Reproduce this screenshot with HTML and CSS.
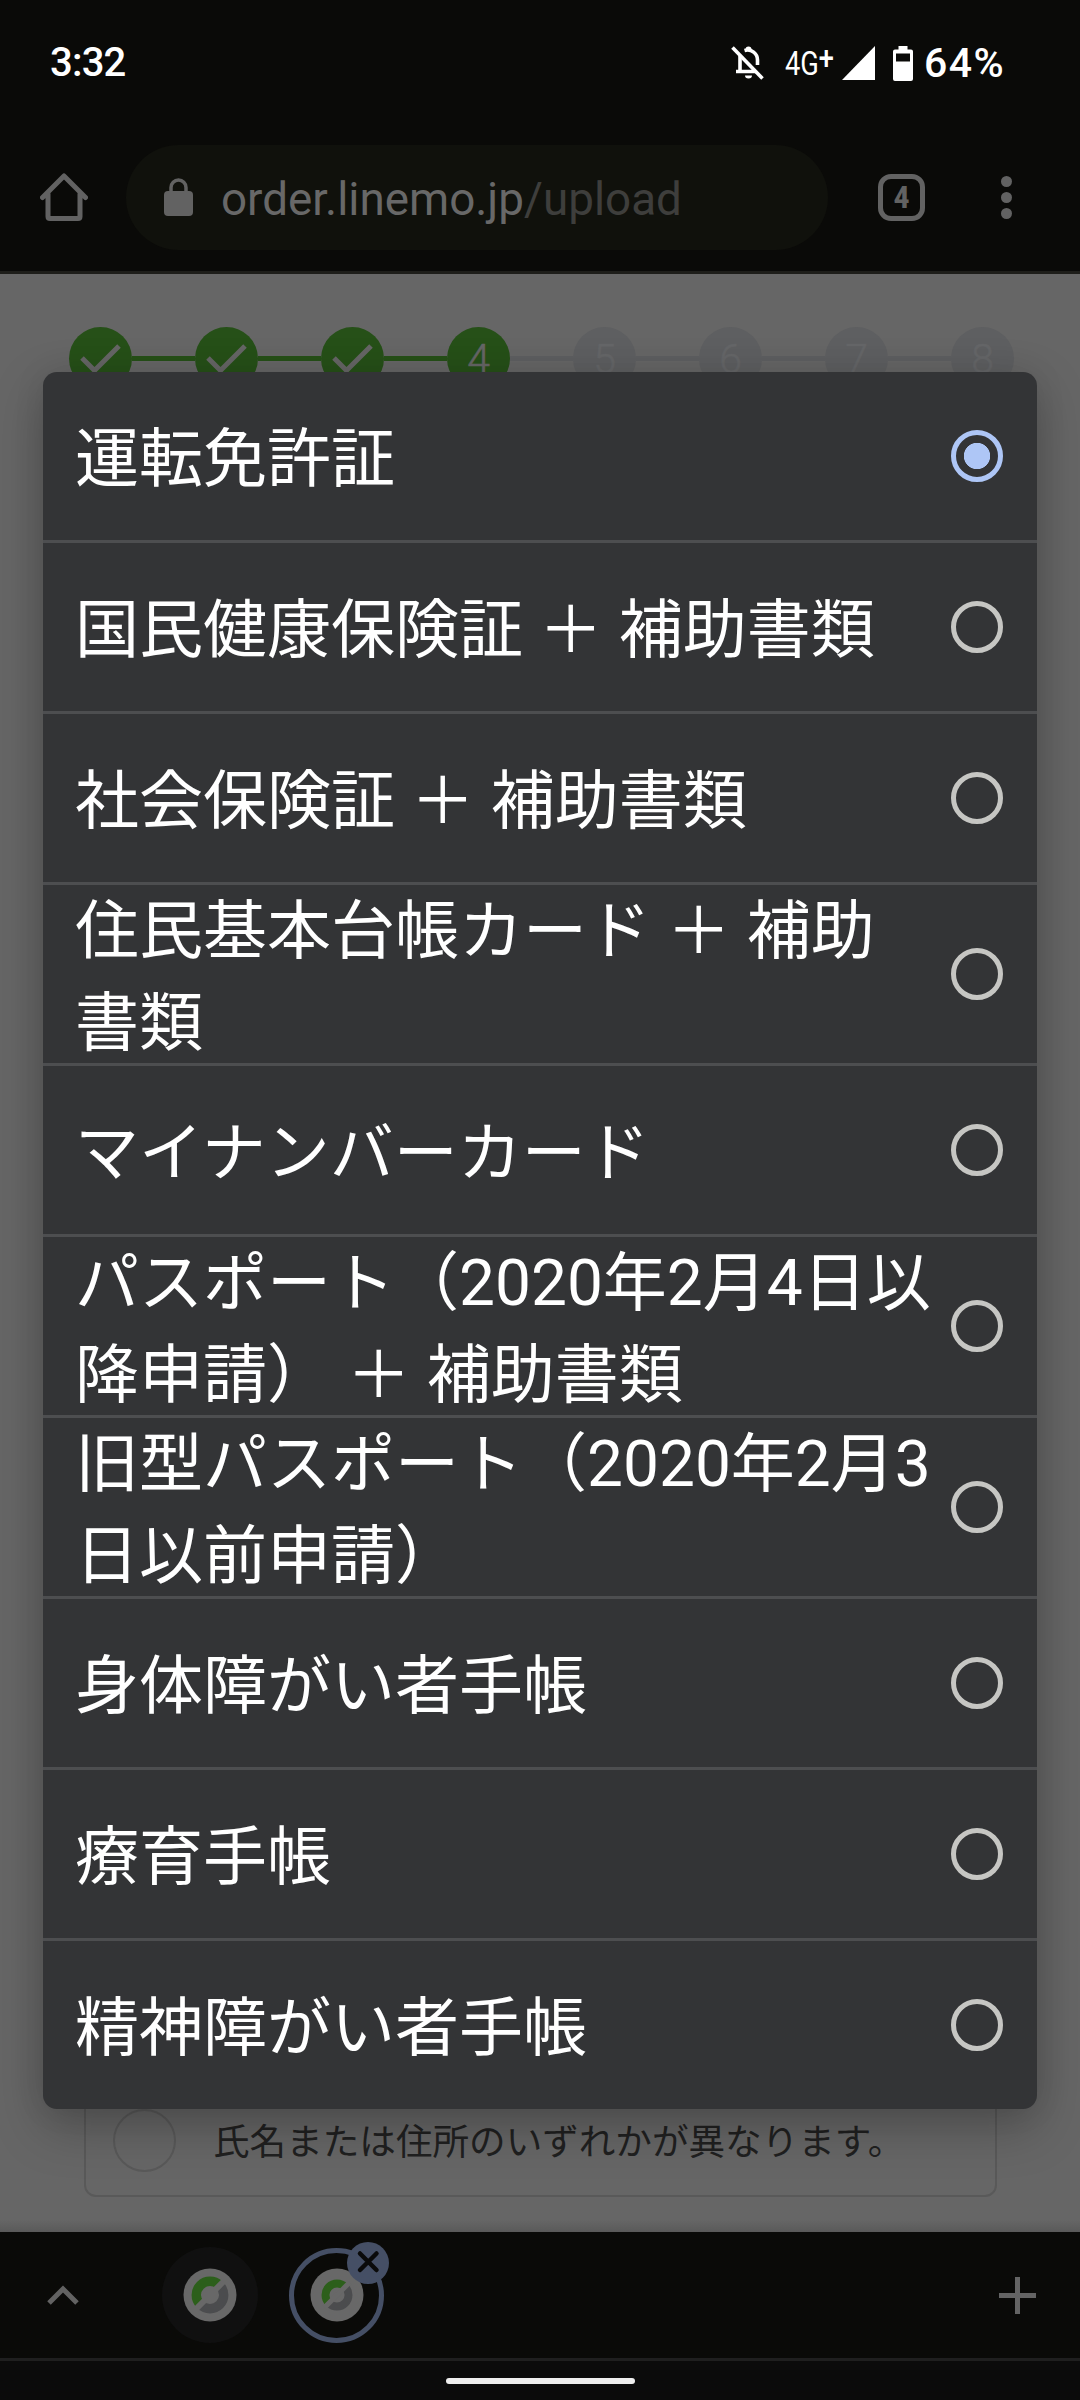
FILE: index.html
```html
<!DOCTYPE html>
<html lang="ja">
<head>
<meta charset="utf-8">
<title>order.linemo.jp/upload</title>
<link rel="stylesheet" href="styles.css">
</head>
<body>
<div class="screen">
  <header class="status">
    <span class="clock">3:32</span>
    <span class="status-right">
      <svg class="bell" width="34" height="36" viewBox="0 0 34 36" fill="none" stroke="#fff" stroke-width="3.6">
        <path d="M9 11V26.500M5 26.500H25M13.500 5.500c7-2 13 3 13 9.500v5"/>
        <path d="M1.500 2.500L31.500 33.500"/>
        <path d="M14.500 4.500a3 3 0 0 1 6 0zM14 30.500h7a3.500 3 0 0 1-7 0z" fill="#fff" stroke="none"/>
      </svg>
      <span class="net">4G<span class="net-plus">+</span></span>
      <svg class="signal" width="33" height="34" viewBox="0 0 33 34"><path d="M33 0V34H0z" fill="#fff"/></svg>
      <svg class="battery" width="20" height="35" viewBox="0 0 20 35"><path fill-rule="evenodd" d="M5.500 0h9v3.500H18a2 2 0 0 1 2 2V33a2 2 0 0 1-2 2H2a2 2 0 0 1-2-2V5.500a2 2 0 0 1 2-2h3.500zM3 7.500V15.500H17V7.500z" fill="#fff"/></svg>
      <span class="percent">64%</span>
    </span>
  </header>

  <div class="toolbar">
    <svg class="home" width="48" height="48" viewBox="0 0 48 48" fill="none" stroke="#626262" stroke-width="5" stroke-linejoin="round" stroke-linecap="round"><path d="M2.500 24.500L24 3L45.500 24.500M8 21V43.500Q8 45.500 10 45.500H38Q40 45.500 40 43.500V21"/></svg>
    <div class="omnibox">
      <svg class="lock" width="29" height="38" viewBox="0 0 29 38"><rect y="13" width="29" height="25" rx="4" fill="#626262"/><path d="M7 14V9.500a7.500 7.500 0 0 1 15 0V14" fill="none" stroke="#626262" stroke-width="3.500"/></svg>
      <span class="url">order.linemo.jp<span class="url-path">/upload</span></span>
    </div>
    <span class="tabs">4</span>
    <span class="menu"><i></i><i></i><i></i></span>
  </div>

  <main class="page">
    <ol class="steps">
      <li class="step done"><svg width="41" height="30" viewBox="0 0 41 30"><path d="M2 14L14.500 26.500L39 2" fill="none" stroke="#666" stroke-width="5"/></svg></li>
      <li class="step done"><svg width="41" height="30" viewBox="0 0 41 30"><path d="M2 14L14.500 26.500L39 2" fill="none" stroke="#666" stroke-width="5"/></svg></li>
      <li class="step done"><svg width="41" height="30" viewBox="0 0 41 30"><path d="M2 14L14.500 26.500L39 2" fill="none" stroke="#666" stroke-width="5"/></svg></li>
      <li class="step current">4</li>
      <li class="step">5</li>
      <li class="step">6</li>
      <li class="step">7</li>
      <li class="step">8</li>
    </ol>
    <div class="choice">
      <span class="choice-mark"></span>
      <span class="choice-text">氏名または住所のいずれかが異なります。</span>
    </div>
    <div class="edge"></div>
  </main>

  <footer class="tabstrip">
    <svg class="up" width="32" height="20" viewBox="0 0 32 20"><path d="M2 18L16 4L30 18" fill="none" stroke="#626262" stroke-width="5"/></svg>
    <span class="tab">
      <svg class="favicon" width="54" height="54" viewBox="0 0 54 54"><circle cx="27" cy="27" r="26.500" fill="#686868"/><g fill="none"><path d="M17.300 36.700A13.700 13.700 0 0 1 36.700 17.300" stroke="#2c5f1b" stroke-width="9.400"/><path d="M36.700 17.300A13.700 13.700 0 0 1 17.300 36.700" stroke="#4b4c4e" stroke-width="9.400"/><path d="M12 42L42 12" stroke="#686868" stroke-width="6"/></g></svg>
    </span>
    <span class="tab selected">
      <svg class="favicon" width="54" height="54" viewBox="0 0 54 54"><circle cx="27" cy="27" r="26.500" fill="#686868"/><g fill="none" transform="translate(27 27) scale(.84) translate(-27 -27)"><path d="M17.300 36.700A13.700 13.700 0 0 1 36.700 17.300" stroke="#2c5f1b" stroke-width="9.400"/><path d="M36.700 17.300A13.700 13.700 0 0 1 17.300 36.700" stroke="#4b4c4e" stroke-width="9.400"/><path d="M12 42L42 12" stroke="#686868" stroke-width="6"/></g></svg>
      <svg class="close" width="42" height="42" viewBox="0 0 42 42"><circle cx="21" cy="21" r="21" fill="#454f65"/><path d="M13 11.500L29.500 28M29.500 11.500L13 28" stroke="#0a0a0a" stroke-width="4.500" stroke-linecap="round"/></svg>
    </span>
    <svg class="add" width="37" height="37" viewBox="0 0 37 37"><path d="M0 18.500H37M18.500 0V37" stroke="#646464" stroke-width="5"/></svg>
  </footer>
  <div class="navbar"><span class="handle"></span></div>

  <ul class="dialog">
    <li class="option"><span class="label">運転免許証</span><span class="radio checked"></span></li>
    <li class="option"><span class="label">国民健康保険証 ＋ 補助書類</span><span class="radio"></span></li>
    <li class="option"><span class="label">社会保険証 ＋ 補助書類</span><span class="radio"></span></li>
    <li class="option tall"><span class="label">住民基本台帳カード ＋ 補助<br>書類</span><span class="radio"></span></li>
    <li class="option"><span class="label">マイナンバーカード</span><span class="radio"></span></li>
    <li class="option tall"><span class="label">パスポート（2020年2月4日以<br>降申請） ＋ 補助書類</span><span class="radio"></span></li>
    <li class="option tall"><span class="label">旧型パスポート（2020年2月3<br>日以前申請）</span><span class="radio"></span></li>
    <li class="option"><span class="label">身体障がい者手帳</span><span class="radio"></span></li>
    <li class="option"><span class="label">療育手帳</span><span class="radio"></span></li>
    <li class="option"><span class="label">精神障がい者手帳</span><span class="radio"></span></li>
  </ul>
</div>
</body>
</html>
```
FILE: styles.css
```css
* { box-sizing: border-box; }
body { margin: 0; font-family: Roboto, "Noto Sans CJK JP", sans-serif; }
ul, ol { margin: 0; padding: 0; list-style: none; }
svg { display: block; flex: none; }

.screen {
  position: relative;
  width: 1080px;
  height: 2400px;
  display: flex;
  flex-direction: column;
  background: #0a0a08;
  overflow: hidden;
}

.status {
  height: 124px;
  padding: 2px 72px 0 50px;
  display: flex;
  justify-content: space-between;
  align-items: center;
  color: #fff;
}
.clock, .percent { font-size: 40px; font-weight: 500; line-height: 48px; }
.clock { letter-spacing: -.8px; }
.status-right { display: flex; align-items: center; }
.net { margin-left: 20px; width: 51px; display: flex; font-size: 34px; line-height: 40px; transform: scaleX(.8); transform-origin: left; }
.net-plus { font-size: 34px; font-weight: 500; margin-top: -6px; }
.signal { margin-left: 6px; }
.battery { margin-left: 18px; }
.percent { margin-left: 11px; width: 84px; font-size: 41px; letter-spacing: 1.5px; }

.toolbar {
  height: 150px;
  padding: 21px 66px 24px 40px;
  display: flex;
  align-items: flex-start;
  border-bottom: 3px solid #1e1e1a;
}
.home { margin-top: 28px; }
.omnibox {
  margin-left: 38px;
  width: 702px;
  height: 105px;
  padding-left: 38px;
  border-radius: 53px;
  background: #10110c;
  display: flex;
  align-items: center;
}
.lock { margin-top: -1px; }
.url { margin-left: 28px; padding-top: 4px; font-size: 45.800px; line-height: 56px; color: #686868; white-space: nowrap; }
.url-path { color: #3e3e3c; }
.tabs {
  margin: 29px 0 0 50px;
  width: 47px;
  height: 47px;
  border: 5px solid #626262;
  border-radius: 13px;
  color: #626262;
  font: 700 32px/36px "Roboto Condensed", Roboto, sans-serif;
  text-align: center;
}
.menu { margin: 31px 0 0 76px; display: flex; flex-direction: column; gap: 5px; }
.menu i { width: 11px; height: 11px; border-radius: 50%; background: #626262; }

.page {
  height: 1958px;
  background: #666;
  display: flex;
  flex-direction: column;
}
.steps { padding: 53px 0 0 69px; display: flex; gap: 63px; }
.step {
  position: relative;
  width: 63px;
  height: 63px;
  border-radius: 50%;
  background: #5e5f61;
  color: #656668;
  font-size: 41px;
  font-weight: 300;
  -webkit-text-stroke: .6px;
  line-height: 65px;
  text-align: center;
}
.step + .step::before {
  content: "";
  position: absolute;
  right: 63px;
  top: 29px;
  width: 63px;
  height: 5px;
  background: #5e5f61;
}
.step.done, .step.current, .step.done + .step::before { background: #265018; }
.step.current { color: #666; }
.step svg { margin: 17px 0 0 11px; }
.choice {
  margin: auto 83px 35px 84px;
  height: 113px;
  padding-left: 27px;
  border: 2px solid #595959;
  border-radius: 12px;
  display: flex;
  align-items: center;
  font: 36.600px/54px "Noto Sans CJK JP", sans-serif;
  color: #202020;
}
.choice-mark { width: 63px; height: 63px; margin-right: 37px; border: 2px solid #595959; border-radius: 50%; }
.choice-text { padding-bottom: 1px; }
.edge { height: 12px; margin-top: -12px; background: linear-gradient(transparent, rgba(0,0,0,.12)); }

.tabstrip {
  height: 129px;
  padding: 0 44px 0 47px;
  border-bottom: 3px solid #1f1f1f;
  display: flex;
  align-items: center;
}
.tab {
  position: relative;
  width: 96px;
  height: 96px;
  margin-left: 83px;
  border-radius: 50%;
  background: #101010;
  display: flex;
  align-items: center;
  justify-content: center;
}
.tab.selected { margin-left: 31px; width: 95px; height: 95px; background: none; border: 5px solid #454f65; }
.close { position: absolute; left: 53px; top: -11px; }
.add { margin-left: auto; }
.navbar { height: 39px; padding-top: 17px; background: #0b0b0b; display: flex; justify-content: center; }
.handle { width: 189px; height: 6px; border-radius: 3px; background: #eee; }

.dialog {
  position: absolute;
  left: 43px;
  top: 372px;
  width: 994px;
  border-radius: 14px;
  background: #333436;
  box-shadow: 0 18px 50px rgba(0,0,0,.25), 0 0 32px rgba(0,0,0,.08);
}
.option {
  height: 168px;
  padding: 0 34px 0 32px;
  display: flex;
  align-items: center;
  justify-content: space-between;
}
.option + .option { height: 171px; border-top: 3px solid #4d4e50; }
.option.tall.tall { height: 181px; }
.label { padding-top: 8px; font-size: 64px; line-height: 92px; color: #fff; white-space: nowrap; }
.radio {
  flex: none;
  width: 52px;
  height: 52px;
  border: 5px solid #c6c6c3;
  border-radius: 50%;
}
.radio.checked { border-color: #aec6f6; background: radial-gradient(circle, #aec6f6 12.800px, transparent 13.500px); }
```
